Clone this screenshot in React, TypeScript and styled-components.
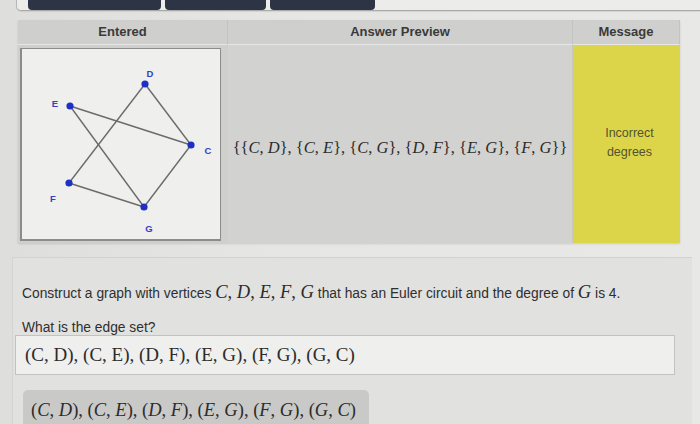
import React from "react";
import styled, { createGlobalStyle } from "styled-components";

const Global = createGlobalStyle`
  html, body { margin: 0; padding: 0; background: #e4e4e2; }
  body { font-family: "Liberation Sans", Arial, sans-serif; color: #2a2a2a; overflow: hidden; }
`;

const Page = styled.div`
  width: 700px;
  height: 424px;
  overflow: hidden;
  display: flex;
  flex-direction: column;
  background: linear-gradient(90deg, #dededc 0%, #e6e6e4 40%, #e8e8e6 100%);
`;

const TopBar = styled.div`
  margin-left: 16px;
  height: 13px;
  background: #ececea;
  border-left: 1px solid #b5b5b3;
  border-bottom: 1.5px solid #a9a9a7;
  border-bottom-left-radius: 5px;
  display: flex;
  gap: 4px;
  padding-left: 11px;
  box-shadow: 0 1px 1px rgba(0,0,0,0.08);
`;

const NavButton = styled.div<{ $w: number }>`
  width: ${(p) => p.$w}px;
  height: 10px;
  background: #2c3445;
  border-radius: 0 0 4px 4px;
`;

const Table = styled.div`
  margin: 9px 0 0 18px;
  width: 662px;
  display: grid;
  grid-template-columns: 210px 345px 107px;
  grid-template-rows: 25px 198px;
  box-shadow: 0 1px 2px rgba(0,0,0,0.12);
`;

const HeadCell = styled.div`
  background: #cfcfcd;
  border-bottom: 1px solid #e6e6e4;
  border-right: 1px solid #c3c3c1;
  display: flex;
  align-items: center;
  justify-content: center;
  font-family: "Liberation Sans", Arial, sans-serif;
  font-weight: 700;
  font-size: 13px;
  color: #3a3a3a;
  padding-bottom: 1px;
`;

const EnteredCell = styled.div`
  background: #cfcfcd;
  padding: 3px 6px 1px 2px;
  display: flex;
`;

const GraphBox = styled.div`
  width: 198px;
  height: 190px;
  background: #efefed;
  border: 2px solid #8c8c8a;
  border-top-width: 1.5px;
  border-right-width: 1.5px;
`;

const PreviewCell = styled.div`
  background: #d2d2d0;
  display: flex;
  align-items: center;
  justify-content: center;
  padding-top: 8px;
  border-right: 1px solid #c6c6c4;
`;

const MathText = styled.span<{ $size?: number }>`
  font-family: "Liberation Serif", "Times New Roman", serif;
  font-size: ${(p) => p.$size ?? 17}px;
  color: #2c2c2c;
  white-space: nowrap;
`;

const Var = styled.i`
  font-style: italic;
`;

const MessageCell = styled.div`
  background: #dcd54a;
  display: flex;
  align-items: center;
  justify-content: center;
  text-align: center;
  font-size: 12.5px;
  line-height: 19px;
  color: #55532e;
  padding-bottom: 2px;
  padding-left: 6px;
`;

const QuestionPanel = styled.div`
  margin: 14px 0 0 12px;
  width: 679px;
  flex: 1;
  background: #e1e1df;
  border-top: 1px solid #d2d2d0;
  border-left: 1px solid #d4d4d2;
  display: flex;
  flex-direction: column;
  padding: 23px 0 0 0;
`;

const Question = styled.p`
  margin: 0 0 0 9px;
  font-size: 13.8px;
  color: #2f2f2f;
  line-height: 22px;
`;

const Prompt = styled.p`
  margin: 16px 0 0 9px;
  font-size: 13.8px;
  color: #2f2f2f;
  line-height: 14px;
`;

const AnswerInput = styled.div`
  margin: 0 0 0 2px;
  width: 660px;
  height: 40px;
  background: #efefed;
  border: 1px solid #c2c2c0;
  display: flex;
  align-items: center;
  padding-left: 9px;
  box-sizing: border-box;
`;

const PreviewBox = styled.div`
  margin: 15px 0 0 10px;
  width: 346px;
  height: 44px;
  background: #c9c9c7;
  border-radius: 5px 5px 0 0;
  display: flex;
  align-items: flex-start;
  padding: 10px 0 0 8px;
  box-sizing: border-box;
`;

const nodes = [
  { id: "D", x: 123, y: 35, lx: 128, ly: 28 },
  { id: "E", x: 48, y: 57, lx: 33, ly: 58 },
  { id: "C", x: 169, y: 96, lx: 186, ly: 105 },
  { id: "F", x: 47, y: 134, lx: 31, ly: 153 },
  { id: "G", x: 122, y: 158, lx: 127, ly: 183 },
];

const edges: [string, string][] = [
  ["D", "C"],
  ["D", "F"],
  ["E", "C"],
  ["E", "G"],
  ["C", "G"],
  ["F", "G"],
];

const Graph = () => {
  const pos = (id: string) => nodes.find((n) => n.id === id)!;
  return (
    <svg width="198" height="190" viewBox="0 0 198 190">
      {edges.map(([a, b]) => (
        <line
          key={a + b}
          x1={pos(a).x}
          y1={pos(a).y}
          x2={pos(b).x}
          y2={pos(b).y}
          stroke="#6b6b69"
          strokeWidth={1.4}
        />
      ))}
      {nodes.map((n) => (
        <g key={n.id}>
          <circle cx={n.x} cy={n.y} r={3.6} fill="#1d2fc4" />
          <text
            x={n.lx}
            y={n.ly}
            fontFamily="Liberation Sans, Arial, sans-serif"
            fontWeight={700}
            fontSize={9.5}
            fill="#3340c0"
            textAnchor="middle"
          >
            {n.id}
          </text>
        </g>
      ))}
    </svg>
  );
};

const pairs = [
  ["C", "D"],
  ["C", "E"],
  ["C", "G"],
  ["D", "F"],
  ["E", "G"],
  ["F", "G"],
];

const edgeList = [
  ["C", "D"],
  ["C", "E"],
  ["D", "F"],
  ["E", "G"],
  ["F", "G"],
  ["G", "C"],
];

export default function App() {
  return (
    <Page>
      <Global />
      <TopBar>
        <NavButton $w={133} />
        <NavButton $w={101} />
        <NavButton $w={105} />
      </TopBar>
      <Table>
        <HeadCell>Entered</HeadCell>
        <HeadCell>Answer Preview</HeadCell>
        <HeadCell>Message</HeadCell>
        <EnteredCell>
          <GraphBox>
            <Graph />
          </GraphBox>
        </EnteredCell>
        <PreviewCell>
          <MathText $size={16.5}>
            {"{"}
            {pairs.map(([a, b], i) => (
              <React.Fragment key={i}>
                {"{"}
                <Var>{a}</Var>, <Var>{b}</Var>
                {"}"}
                {i < pairs.length - 1 ? ", " : ""}
              </React.Fragment>
            ))}
            {"}"}
          </MathText>
        </PreviewCell>
        <MessageCell>
          Incorrect
          <br />
          degrees
        </MessageCell>
      </Table>
      <QuestionPanel>
        <Question>
          Construct a graph with vertices{" "}
          <MathText $size={18.5}>
            <Var>C</Var>, <Var>D</Var>, <Var>E</Var>, <Var>F</Var>, <Var>G</Var>
          </MathText>{" "}
          that has an Euler circuit and the degree of{" "}
          <MathText $size={18.5}>
            <Var>G</Var>
          </MathText>{" "}
          is 4.
        </Question>
        <Prompt>What is the edge set?</Prompt>
        <AnswerInput>
          <MathText $size={19}>
            {edgeList.map(([a, b]) => `(${a}, ${b})`).join(", ")}
          </MathText>
        </AnswerInput>
        <PreviewBox>
          <MathText $size={18.5}>
            {edgeList.map(([a, b], i) => (
              <React.Fragment key={i}>
                (<Var>{a}</Var>, <Var>{b}</Var>)
                {i < edgeList.length - 1 ? ", " : ""}
              </React.Fragment>
            ))}
          </MathText>
        </PreviewBox>
      </QuestionPanel>
    </Page>
  );
}
